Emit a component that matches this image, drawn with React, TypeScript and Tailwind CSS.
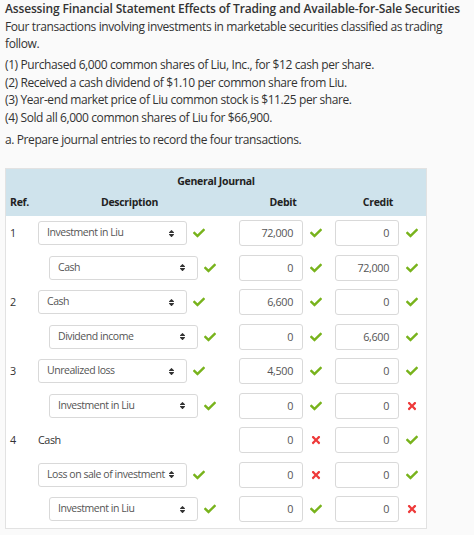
import React from 'react';
import { FaCheck, FaTimes, FaSort } from 'react-icons/fa';

type Row = {
  ref?: string;
  account: string;
  indent?: boolean;
  plain?: boolean;
  accountOk?: boolean;
  debit: string;
  debitOk: boolean;
  credit: string;
  creditOk: boolean;
};

const rows: Row[] = [
  { ref: '1', account: 'Investment in Liu', accountOk: true, debit: '72,000', debitOk: true, credit: '0', creditOk: true },
  { account: 'Cash', indent: true, accountOk: true, debit: '0', debitOk: true, credit: '72,000', creditOk: true },
  { ref: '2', account: 'Cash', accountOk: true, debit: '6,600', debitOk: true, credit: '0', creditOk: true },
  { account: 'Dividend income', indent: true, accountOk: true, debit: '0', debitOk: true, credit: '6,600', creditOk: true },
  { ref: '3', account: 'Unrealized loss', accountOk: true, debit: '4,500', debitOk: true, credit: '0', creditOk: true },
  { account: 'Investment in Liu', indent: true, accountOk: true, debit: '0', debitOk: true, credit: '0', creditOk: false },
  { ref: '4', account: 'Cash', plain: true, debit: '0', debitOk: false, credit: '0', creditOk: true },
  { account: 'Loss on sale of investment', accountOk: true, debit: '0', debitOk: false, credit: '0', creditOk: true },
  { account: 'Investment in Liu', indent: true, accountOk: true, debit: '0', debitOk: true, credit: '0', creditOk: false },
];

const Mark = ({ ok }: { ok: boolean }) =>
  ok ? (
    <FaCheck className="text-[#78b31c]" size={12} />
  ) : (
    <FaTimes className="text-[#ee3a3a]" size={12} />
  );

const Amount = ({ value, ok }: { value: string; ok: boolean }) => (
  <div className="flex items-center">
    <div className="w-[64px] h-[26px] border border-[#d9d9d9] rounded-[3px] bg-white flex items-center justify-end pr-[9px] text-[10.8px] tracking-[-0.35px] text-[#555]">
      {value}
    </div>
    <div className="ml-[7px] w-[12px] flex justify-center">
      <Mark ok={ok} />
    </div>
  </div>
);

export default function App() {
  return (
    <div
      className="w-[474px] h-[535px] bg-[#fafafa] text-[#333] overflow-hidden px-[5px]"
      style={{ fontFamily: '"Open Sans", "Liberation Sans", sans-serif' }}
    >
      <div className="text-[12px] tracking-[-0.4px] leading-[17.5px]">
        <p className="font-semibold tracking-[-0.15px] whitespace-nowrap">
          Assessing Financial Statement Effects of Trading and Available-for-Sale Securities
        </p>
        <p>Four transactions involving investments in marketable securities classified as trading follow.</p>
        <div className="mt-[3.5px]">
          <p>(1) Purchased 6,000 common shares of Liu, Inc., for $12 cash per share.</p>
          <p>(2) Received a cash dividend of $1.10 per common share from Liu.</p>
          <p>(3) Year-end market price of Liu common stock is $11.25 per share.</p>
          <p>(4) Sold all 6,000 common shares of Liu for $66,900.</p>
        </div>
        <p className="mt-[4.5px]">a. Prepare journal entries to record the four transactions.</p>
      </div>

      <div className="mt-[20px] w-[422px] border border-[#e2e2e2] bg-white">
        <div className="bg-[#cfe3ec] h-[47px] text-[10.5px] tracking-[-0.3px] font-bold text-[#222]">
          <div className="text-center pt-[4px] leading-[16px]">General Journal</div>
          <div className="grid grid-cols-[32px_201px_96px_91px] leading-[16px] mt-[5px]">
            <div className="pl-[4px]">Ref.</div>
            <div className="text-center pr-[18px]">Description</div>
            <div className="text-center pr-[8px]">Debit</div>
            <div className="text-center pr-[5px]">Credit</div>
          </div>
        </div>
        <div className="pb-[1px]">
          {rows.map((r, i) => (
            <div key={i} className="grid grid-cols-[32px_201px_96px_91px] h-[34.5px] items-center text-[10.8px] tracking-[-0.45px]">
              <div className="pl-[4px]">{r.ref}</div>
              <div className={`flex items-center ${r.indent ? 'pl-[11px]' : ''}`}>
                {r.plain ? (
                  <span className="text-[#333]">{r.account}</span>
                ) : (
                  <>
                    <div className="w-[149px] h-[24px] border border-[#d9d9d9] rounded-[3px] bg-white flex items-center justify-between pl-[8px] pr-[10px] text-[10.5px] text-[#555] whitespace-nowrap">
                      <span>{r.account}</span>
                      <FaSort className="text-[#333] shrink-0" size={9} />
                    </div>
                    <div className="ml-[6px] w-[12px] flex justify-center">
                      <Mark ok={!!r.accountOk} />
                    </div>
                  </>
                )}
              </div>
              <Amount value={r.debit} ok={r.debitOk} />
              <Amount value={r.credit} ok={r.creditOk} />
            </div>
          ))}
        </div>
      </div>
    </div>
  );
}
